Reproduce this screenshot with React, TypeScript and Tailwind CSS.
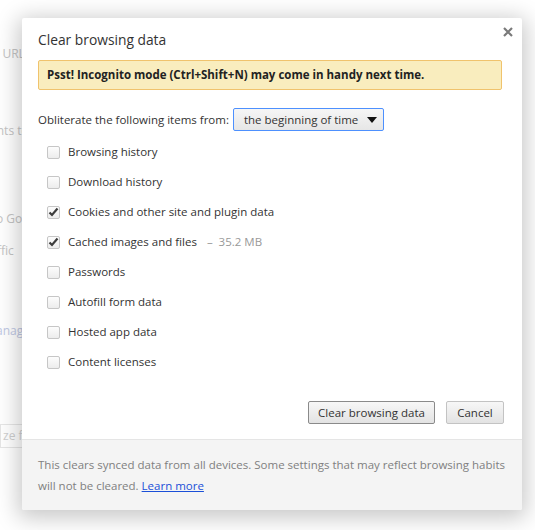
const items = [
  { label: 'Browsing history', checked: false },
  { label: 'Download history', checked: false },
  { label: 'Cookies and other site and plugin data', checked: true },
  { label: 'Cached images and files', checked: true, note: '35.2 MB' },
  { label: 'Passwords', checked: false },
  { label: 'Autofill form data', checked: false },
  { label: 'Hosted app data', checked: false },
  { label: 'Content licenses', checked: false },
];

// settings page peeking out behind the overlay
function SettingsBackdrop() {
  return (
    <div className="absolute inset-0 overflow-hidden text-[12px] text-[#c4c4c4]">
      <div className="w-[22px] overflow-hidden whitespace-nowrap">
        <div className="mt-[45px] h-[16px] -ml-[8px]">d URL</div>
        <div className="mt-[61px] h-[16px] -ml-[10px]">ents to</div>
        <div className="mt-[72px] h-[16px] -ml-[4px]">o Google</div>
        <div className="mt-[16px] h-[16px] -ml-[3px]">ffic</div>
        <div className="mt-[64px] h-[16px] -ml-[4px] text-[#c0c8e4]">anage</div>
        <div className="mt-[14px] h-[16px] -ml-[3px] text-[#c0c8e4]">,</div>
      </div>
      <div className="mt-[56px] h-[24px] w-[60px] border border-[#e6e6e6] pl-[2px] leading-[22px] whitespace-nowrap text-[#cfcfcf]">
        ze fo
      </div>
    </div>
  );
}

function Checkbox({ checked }: { checked: boolean }) {
  return (
    <span className="flex h-[13px] w-[13px] shrink-0 items-center justify-center rounded-[2px] border border-[#c6c6c6] bg-gradient-to-b from-[#fdfdfd] to-[#ececec]">
      {checked && (
        <svg width="11" height="10" viewBox="0 0 11 10">
          <path d="M1.5 5.5 L4 8 L9.5 1.5" fill="none" stroke="#3c3c3c" strokeWidth="2.2" />
        </svg>
      )}
    </span>
  );
}

export default function App() {
  return (
    <div className="relative h-[530px] w-[535px] overflow-hidden bg-white font-['Open_Sans',sans-serif] text-[11.5px] text-[#333]">
      <SettingsBackdrop />

      <div className="relative ml-[22px] mt-[18px] w-[500px] rounded-[2px] bg-white shadow-[0_4px_22px_4px_rgba(0,0,0,0.22)]">
        <button className="absolute right-[9px] top-[9px] text-[#7a7a7a]">
          <svg width="10" height="10" viewBox="0 0 10 10">
            <path d="M1 1 L9 9 M9 1 L1 9" stroke="currentColor" strokeWidth="2.2" />
          </svg>
        </button>

        <div className="px-4 pt-[12px] pb-[15px]">
          <h1 className="h-[20px] text-[13.8px] leading-[20px] text-[#333]">Clear browsing data</h1>

          <div className="mr-[4px] mt-[10px] flex h-[30px] items-center rounded-[2px] border border-[#f0c36d] bg-[#f9edbe] px-[8px] font-bold text-[#222]">
            Psst! Incognito mode (Ctrl+Shift+N) may come in handy next time.
          </div>

          <div className="mt-[18px] flex h-[23px] items-center gap-[4px]">
            <span>Obliterate the following items from:</span>
            <div className="flex h-[23px] w-[151px] items-center justify-between rounded-[2px] border border-[#4d90fe] bg-gradient-to-b from-[#f6f6f6] to-[#e6e6e6] pl-[10px] pr-[6px] text-[#333]">
              <span>the beginning of time</span>
              <svg width="10" height="6" viewBox="0 0 10 6">
                <path d="M0 0 H10 L5 6 Z" fill="#111" />
              </svg>
            </div>
          </div>

          <ul className="mt-[6px]">
            {items.map((item) => (
              <li key={item.label} className="flex h-[30px] items-center gap-[8px] pl-[9px]">
                <Checkbox checked={item.checked} />
                <span>{item.label}</span>
                {item.note && <span className="ml-[2px] text-[#999]">–&nbsp;&nbsp;{item.note}</span>}
              </li>
            ))}
          </ul>

          <div className="mt-[24px] flex justify-end gap-[11px] pr-[2px]">
            <button className="h-[23px] w-[127px] rounded-[2px] border border-[#8a8a8a] bg-gradient-to-b from-[#f7f7f7] to-[#e3e3e3] text-[#333]">
              Clear browsing data
            </button>
            <button className="h-[23px] w-[58px] rounded-[2px] border border-[#c3c3c3] bg-gradient-to-b from-[#f7f7f7] to-[#e3e3e3] text-[#333]">
              Cancel
            </button>
          </div>
        </div>

        <div className="h-[71px] rounded-b-[2px] border-t border-[#e5e5e5] bg-[#f4f4f4] px-4 pt-[14px] leading-[21px] whitespace-nowrap text-[#808080]">
          This clears synced data from all devices. Some settings that may reflect browsing habits
          <br />
          will not be cleared. <a className="text-[#1a4fd8] underline">Learn more</a>
        </div>
      </div>
    </div>
  );
}
